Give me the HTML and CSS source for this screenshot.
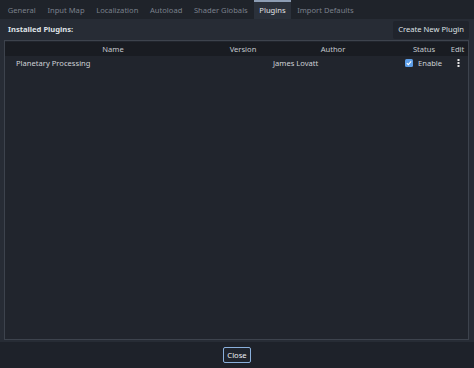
FILE: index.html
```html
<!DOCTYPE html>
<html>
<head>
<meta charset="utf-8">
<link rel="stylesheet" href="styles.css">
</head>
<body>
<div class="window">
  <div class="tabs">
    <div class="tab">General</div>
    <div class="tab">Input Map</div>
    <div class="tab">Localization</div>
    <div class="tab">Autoload</div>
    <div class="tab">Shader Globals</div>
    <div class="tab active">Plugins</div>
    <div class="tab">Import Defaults</div>
  </div>
  <div class="panel">
    <div class="toprow">
      <div class="label">Installed Plugins:</div>
      <div class="btn">Create New Plugin</div>
    </div>
    <div class="tree">
      <div class="grid head">
        <div class="c">Name</div>
        <div class="c">Version</div>
        <div class="c">Author</div>
        <div class="c">Status</div>
        <div class="c">Edit</div>
      </div>
      <div class="grid row">
        <div class="name">Planetary Processing</div>
        <div></div>
        <div class="author">James Lovatt</div>
        <div class="status">
          <svg class="check" width="8" height="8" viewBox="0 0 8 8"><rect x="0" y="0" width="8" height="8" rx="1.5" fill="#5d9ee8"/><path d="M1.8 4.2 L3.3 5.6 L6.2 2.4" stroke="#ffffff" stroke-width="1.1" fill="none"/></svg>
          <span>Enable</span>
        </div>
        <div class="edit">
          <svg width="3" height="8" viewBox="0 0 3 8"><rect x="0.5" y="0" width="2" height="2" fill="#e6e6e6"/><rect x="0.5" y="3" width="2" height="2" fill="#e6e6e6"/><rect x="0.5" y="6" width="2" height="2" fill="#e6e6e6"/></svg>
        </div>
      </div>
    </div>
  </div>
  <div class="footer">
    <div class="close">Close</div>
  </div>
</div>
</body>
</html>
```
FILE: styles.css
```css
html, body {
  margin: 0;
  padding: 0;
  background: #1e222a;
}
body {
  width: 474px;
  height: 368px;
  overflow: hidden;
  font-family: "Noto Sans", "Open Sans", sans-serif;
  font-size: 7.6px;
  color: #cfd2d7;
}
.window {
  display: flex;
  flex-direction: column;
  height: 368px;
}
.tabs {
  height: 19px;
  display: flex;
  align-items: stretch;
  background: #1f232a;
  padding-left: 2px;
}
.tab {
  display: flex;
  align-items: center;
  padding: 0 5.8px 2px;
  color: #7a808a;
  box-sizing: border-box;
  border-top: 2px solid transparent;
}
.tab.active {
  background: #2b313b;
  color: #e0e2e6;
  border-top: 2px solid #8d9db4;
}
.panel {
  flex: 1;
  background: #272c35;
  display: flex;
  flex-direction: column;
  padding: 0 5px 2px 4px;
}
.toprow {
  height: 21px;
  display: flex;
  align-items: center;
  justify-content: space-between;
}
.label {
  font-weight: bold;
  padding-left: 4px;
  color: #dfe1e5;
  padding-bottom: 1px;
}
.btn {
  height: 18px;
  display: flex;
  align-items: center;
  padding: 0 5px 1px;
  box-sizing: border-box;
  background: #20242c;
  color: #dfe1e5;
  border-radius: 2px;
}
.tree {
  flex: 1;
  background: #21252d;
  border: 1px solid #3d434d;
  display: flex;
  flex-direction: column;
}
.grid {
  display: grid;
  grid-template-columns: 216px 44px 136px 46px 21px;
  align-items: center;
}
.head {
  height: 14px;
  background: #191c22;
  margin-top: 1px;
  color: #c4c8ce;
  padding-bottom: 1px;
  box-sizing: border-box;
}
.head .c {
  text-align: center;
}
.row {
  height: 15px;
  padding-bottom: 1px;
  box-sizing: border-box;
}
.name {
  padding-left: 11px;
}
.author {
  padding-left: 8px;
}
.status {
  display: flex;
  align-items: center;
  gap: 5px;
  padding-left: 4px;
}
.check {
  display: block;
}
.edit {
  display: flex;
  justify-content: center;
  padding-left: 2px;
}
.footer {
  height: 26px;
  display: flex;
  align-items: center;
  justify-content: center;
}
.close {
  height: 16px;
  box-sizing: border-box;
  padding: 0 3px 1px;
  display: flex;
  align-items: center;
  border: 1px solid #8ab0dc;
  border-radius: 2px;
  background: #20252e;
  color: #eef0f4;
}
```
